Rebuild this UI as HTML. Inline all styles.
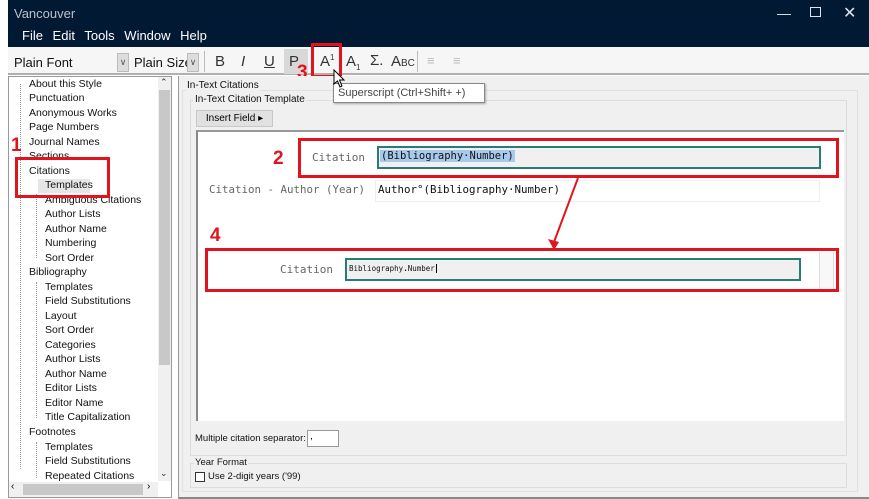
<!DOCTYPE html>
<html><head><meta charset="utf-8"><style>
*{box-sizing:border-box;margin:0;padding:0}
body{width:869px;height:499px;overflow:hidden;background:#fff;font-family:"Liberation Sans",sans-serif;position:relative}
.a{position:absolute}
.t{font-size:11px;color:#111;white-space:nowrap}
.mono{font-family:"DejaVu Sans Mono","Liberation Mono",monospace}
.red{border:3px solid #e0141c}
.num{color:#e0141c;font-weight:bold;font-size:19px}
.tree div{position:absolute;font-size:10.5px;color:#111;white-space:nowrap}
.lb{background:#f0f0f0;padding:0 1px}
</style></head><body>
<div class="a" style="left:8px;top:0;width:861px;height:47px;background:#021934"></div>
<div class="a" style="left:14px;top:6px;color:#b8c0cc;font-size:13px">Vancouver</div>
<div class="a" style="left:22px;top:28px;color:#fff;font-size:13px;word-spacing:6px">File Edit Tools Window Help</div>
<div class="a" style="left:777px;top:5px;color:#dfe4ea;font-size:14px">&#8212;</div>
<div class="a" style="left:810px;top:7px;width:11px;height:10px;border:1.5px solid #dfe4ea"></div>
<div class="a" style="left:843px;top:3px;color:#dfe4ea;font-size:16px">&#10005;</div>
<!-- toolbar -->
<div class="a" style="left:8px;top:47px;width:861px;height:28px;background:#f6f6f6;border-bottom:2px solid #b0b0b0"></div>
<div class="a" style="left:14px;top:55px;font-size:13px;color:#111">Plain Font</div>
<div class="a" style="left:117px;top:53px;width:12px;height:19px;background:#ddd;border:1px solid #bbb;font-size:9px;text-align:center;line-height:17px;color:#555">&#8744;</div>
<div class="a" style="left:134px;top:55px;font-size:13px;color:#111">Plain Size</div>
<div class="a" style="left:187px;top:53px;width:12px;height:19px;background:#ddd;border:1px solid #bbb;font-size:9px;text-align:center;line-height:17px;color:#555">&#8744;</div>
<div class="a" style="left:204px;top:51px;width:1px;height:21px;background:#bbb"></div>
<div class="a" style="left:215px;top:53px;font-size:15px;color:#333">B</div>
<div class="a" style="left:241px;top:53px;font-size:15px;font-style:italic;color:#333">I</div>
<div class="a" style="left:264px;top:53px;font-size:15px;text-decoration:underline;color:#333">U</div>
<div class="a" style="left:284px;top:49px;width:24px;height:25px;background:#d8d8d8"></div>
<div class="a" style="left:289px;top:53px;font-size:15px;color:#333">P</div>
<div class="a" style="left:320px;top:53px;font-size:15px;color:#333">A<sup style="font-size:8px">1</sup></div>
<div class="a" style="left:346px;top:53px;font-size:15px;color:#333">A<sub style="font-size:8px">1</sub></div>
<div class="a" style="left:370px;top:52px;font-size:15px;color:#333">&Sigma;.</div>
<div class="a" style="left:391px;top:53px;font-size:15px;color:#333">A<span style="font-size:10px">BC</span></div>
<div class="a" style="left:417px;top:51px;width:1px;height:21px;background:#bbb"></div>
<div class="a" style="left:427px;top:53px;font-size:13px;color:#bbb">&#8801;</div>
<div class="a" style="left:453px;top:53px;font-size:13px;color:#bbb">&#8801;</div>
<div class="a red" style="left:311px;top:43px;width:31px;height:35px"></div>
<div class="a num" style="left:297px;top:62px">3</div>
<!-- left tree -->
<div class="a" style="left:8px;top:76px;width:164px;height:422px;background:#fff;border:1px solid #999"></div>
<div class="a" style="left:158px;top:77px;width:13px;height:404px;background:#f0f0f0"></div>
<div class="a" style="left:159px;top:90px;width:11px;height:275px;background:#c8c8c8"></div>
<div class="a" style="left:160px;top:77px;font-size:9px;color:#333">&#8963;</div>
<div class="a" style="left:160px;top:468px;font-size:9px;color:#333">&#8964;</div>
<div class="a" style="left:9px;top:482px;width:149px;height:15px;background:#f0f0f0"></div>
<div class="a" style="left:23px;top:484px;width:120px;height:11px;background:#c8c8c8"></div>
<div class="a" style="left:11px;top:481px;font-size:10px">&lsaquo;</div>
<div class="a" style="left:147px;top:481px;font-size:10px">&rsaquo;</div>
<div class="a" style="left:20px;top:84px;width:1px;height:385px;border-left:1px dotted #999"></div>
<div class="a" style="left:36px;top:194px;width:1px;height:64px;border-left:1px dotted #999"></div>
<div class="a" style="left:36px;top:282px;width:1px;height:136px;border-left:1px dotted #999"></div>
<div class="a" style="left:36px;top:442px;width:1px;height:36px;border-left:1px dotted #999"></div>
<div class="a" style="left:38px;top:179px;width:52px;height:14px;background:#e6e6e6"></div>
<div class="tree">
<div style="left:29px;top:78px">About this Style</div>
<div style="left:29px;top:92px">Punctuation</div>
<div style="left:29px;top:107px">Anonymous Works</div>
<div style="left:29px;top:121px">Page Numbers</div>
<div style="left:29px;top:136px">Journal Names</div>
<div style="left:29px;top:150px">Sections</div>
<div style="left:29px;top:165px">Citations</div>
<div style="left:45px;top:179px">Templates</div>
<div style="left:45px;top:194px">Ambiguous Citations</div>
<div style="left:45px;top:208px">Author Lists</div>
<div style="left:45px;top:223px">Author Name</div>
<div style="left:45px;top:237px">Numbering</div>
<div style="left:45px;top:252px">Sort Order</div>
<div style="left:29px;top:266px">Bibliography</div>
<div style="left:45px;top:281px">Templates</div>
<div style="left:45px;top:295px">Field Substitutions</div>
<div style="left:45px;top:310px">Layout</div>
<div style="left:45px;top:324px">Sort Order</div>
<div style="left:45px;top:339px">Categories</div>
<div style="left:45px;top:353px">Author Lists</div>
<div style="left:45px;top:368px">Author Name</div>
<div style="left:45px;top:382px">Editor Lists</div>
<div style="left:45px;top:397px">Editor Name</div>
<div style="left:45px;top:411px">Title Capitalization</div>
<div style="left:29px;top:426px">Footnotes</div>
<div style="left:45px;top:441px">Templates</div>
<div style="left:45px;top:455px">Field Substitutions</div>
<div style="left:45px;top:470px">Repeated Citations</div>
</div>
<div class="a red" style="left:15px;top:157px;width:95px;height:41px"></div>
<div class="a num" style="left:11px;top:135px">1</div>
<!-- right panel -->
<div class="a" style="left:178px;top:76px;width:691px;height:423px;background:#f0f0f0;border-left:1px solid #999;border-bottom:2px solid #888"></div>
<div class="a" style="left:182px;top:90px;width:676px;height:402px;border:1px solid #e0e0e0"></div>
<div class="a t lb" style="left:186px;top:80px;font-size:10px">In-Text Citations</div>
<div class="a" style="left:190px;top:100px;width:657px;height:356px;border:1px solid #ddd"></div>
<div class="a t lb" style="left:194px;top:94px;font-size:10px">In-Text Citation Template</div>
<div class="a" style="left:196px;top:110px;width:77px;height:17px;background:#e1e1e1;border:1px solid #c8c8c8;font-size:10px;text-align:center;line-height:15px">Insert Field &#9656;</div>
<div class="a" style="left:196px;top:130px;width:648px;height:291px;background:#fff;border-left:2px solid #888;border-top:2px solid #999"></div>
<div class="a t mono" style="left:312px;top:151px;color:#666;font-size:11px">Citation</div>
<div class="a" style="left:377px;top:146px;width:444px;height:23px;background:#f0f0f0;border:2px solid #2a7a78"></div>
<div class="a t mono" style="left:380px;top:150px;font-size:10.5px;background:#a7c9ec;padding:0 1px">(Bibliography·Number)</div>
<div class="a red" style="left:298px;top:138px;width:541px;height:40px"></div>
<div class="a num" style="left:273px;top:148px">2</div>
<div class="a t mono" style="left:209px;top:183px;color:#666;font-size:10.8px">Citation - Author (Year)</div>
<div class="a" style="left:375px;top:180px;width:445px;height:22px;border:1px solid #eee"></div>
<div class="a t mono" style="left:378px;top:183px;font-size:10.8px">Author°(Bibliography·Number)</div>
<div class="a num" style="left:210px;top:225px">4</div>
<div class="a" style="left:819px;top:252px;width:15px;height:38px;border-left:1px solid #ddd;border-right:1px solid #ddd;background:#f8f8f8"></div>
<div class="a t mono" style="left:280px;top:263px;color:#666;font-size:11px">Citation</div>
<div class="a" style="left:345px;top:258px;width:456px;height:23px;background:#f0f0f0;border:2px solid #2a7a78"></div>
<div class="a t mono" style="left:349px;top:264px;font-size:7.5px">Bibliography<b>.</b>Number<span style="border-left:1px solid #000;margin-left:1px"></span></div>
<div class="a red" style="left:205px;top:248px;width:634px;height:44px"></div>
<svg class="a" style="left:540px;top:176px" width="50" height="75"><line x1="38" y1="2" x2="14" y2="66" stroke="#e0141c" stroke-width="2"/><polygon points="8,63 14,74 19,66" fill="#e0141c"/></svg>
<div class="a t" style="left:195px;top:433px;font-size:9.5px">Multiple citation separator:</div>
<div class="a" style="left:307px;top:430px;width:32px;height:17px;background:#fff;border:1px solid #999;font-size:10px;padding-left:2px">,</div>
<div class="a" style="left:190px;top:463px;width:657px;height:25px;border:1px solid #ddd"></div>
<div class="a t lb" style="left:194px;top:457px;font-size:9.5px">Year Format</div>
<div class="a" style="left:195px;top:472px;width:10px;height:10px;border:1px solid #333;background:#fff"></div>
<div class="a t" style="left:208px;top:471px;font-size:9.5px">Use 2-digit years ('99)</div>
<!-- tooltip -->
<div class="a" style="left:333px;top:83px;width:152px;height:20px;background:#fff;border:1px solid #888;box-shadow:1px 1px 2px #aaa;font-size:11px;color:#444;padding:3px 0 0 4px;white-space:nowrap">Superscript (Ctrl+Shift+ +)</div>
<svg class="a" style="left:333px;top:69px" width="14" height="20"><path d="M1 1 L1 15 L4.5 12 L7 18 L9 17 L6.5 11 L11 11 Z" fill="#fff" stroke="#000" stroke-width="1"/></svg>
</body></html>
